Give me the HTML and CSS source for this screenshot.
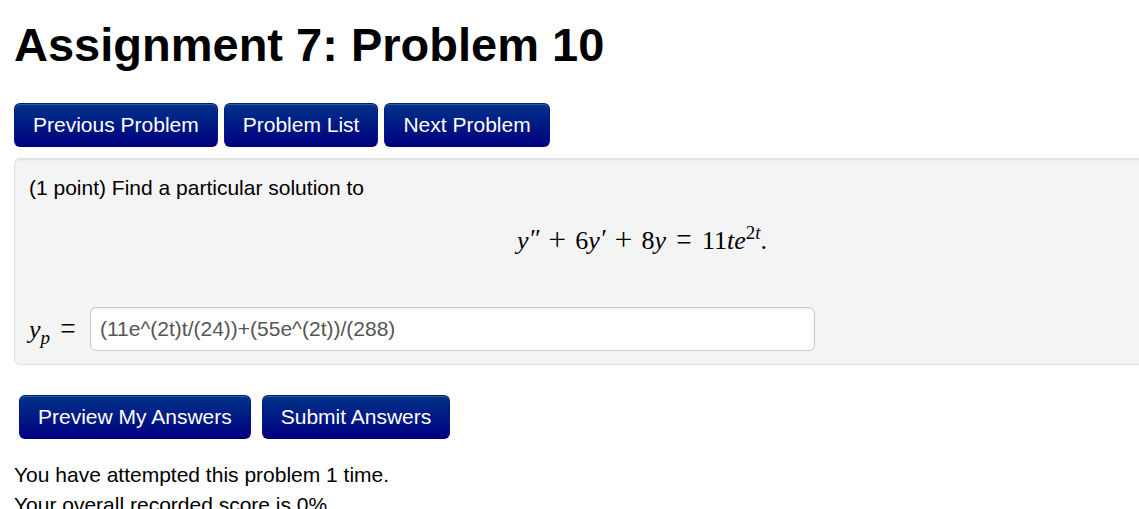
FILE: index.html
```html
<!doctype html>
<html lang="en">
  <head>
    <meta charset="UTF-8" />
    <meta name="viewport" content="width=device-width, initial-scale=1.0" />
    <title>Assignment 7: Problem 10</title>
    <link rel="stylesheet" href="styles.css">
  </head>
  <body>
    <h1>Assignment 7: Problem 10</h1>

    <nav class="problem-nav">
      <a class="btn" href="#previous">Previous Problem</a>
      <a class="btn" href="#list">Problem List</a>
      <a class="btn" href="#next">Next Problem</a>
    </nav>

    <form>
      <div class="problem">
        <p>(1 point) Find a particular solution to</p>

        <div class="equation math">
          <span><i>y</i><sup class="prime">″</sup></span>
          <span class="op">+</span>
          <span>6<i>y</i><sup class="prime">′</sup></span>
          <span class="op">+</span>
          <span>8<i>y</i></span>
          <span class="op">=</span>
          <span>11<i>te</i><sup>2<i>t</i></sup>.</span>
        </div>

        <div class="answer">
          <label class="math" for="answer1">
            <span><i>y</i><sub><i>p</i></sub></span>
            <span class="op">=</span>
          </label>
          <input type="text" id="answer1" value="(11e^(2t)t/(24))+(55e^(2t))/(288)" />
        </div>
      </div>

      <div class="actions">
        <button class="btn" type="button">Preview My Answers</button>
        <button class="btn" type="button">Submit Answers</button>
      </div>
    </form>

    <p>You have attempted this problem 1 time.</p>
    <p>Your overall recorded score is 0%.</p>
  </body>
</html>
```
FILE: styles.css
```css
body {
  margin: 0;
  padding: 15px 14px 0;
  overflow: hidden;
  font-family: "Liberation Sans", Arial, sans-serif;
  font-size: 21px;
  line-height: 30px;
  color: #000;
  background-color: #fff;
}
h1 {
  margin: 0 0 28px;
  font-size: 47px;
  line-height: 60px;
}
p {
  margin: 0;
}
.problem-nav {
  display: flex;
  gap: 6px;
  margin-bottom: 11px;
}
.btn {
  padding: 6px 18px;
  border: 1px solid #001a66;
  border-color: #00246b #001a80 #000066;
  border-radius: 6px;
  background: linear-gradient(#003388, #000080);
  box-shadow: inset 0 1px 0 rgba(255, 255, 255, 0.2);
  color: #fff;
  font: inherit;
  text-decoration: none;
  cursor: pointer;
}
/* the problem area runs on past the right side of the window */
.problem {
  margin-right: -145px;
  padding: 14px 14px 13px;
  border: 1px solid #e1e1e1;
  border-radius: 6px;
  background-color: #f4f4f4;
  box-shadow: inset 0 1px 2px rgba(0, 0, 0, 0.08);
}
.math {
  display: flex;
  align-items: baseline;
  gap: 7px;
  font-family: "Liberation Serif", "Times New Roman", serif;
  font-size: 26px;
  line-height: 30px;
}
.math sup,
.math sub {
  font-size: 19px;
  line-height: 0;
}
.math .prime {
  font-size: 26px;
  font-style: italic;
  vertical-align: 2px;
}
.math .op {
  font-family: Inter, "Liberation Sans", sans-serif;
  font-weight: 200;
  font-size: 34px;
  line-height: 24px;
}
.equation {
  justify-content: center;
  margin: 22px 0 51px;
}
.answer {
  display: flex;
  align-items: center;
  gap: 11px;
}
.answer input {
  box-sizing: border-box;
  width: 725px;
  padding: 6px 9px;
  border: 1px solid #ccc;
  border-radius: 6px;
  background-color: #fff;
  box-shadow: inset 0 1px 2px rgba(0, 0, 0, 0.08);
  color: #555;
  font: inherit;
}
.actions {
  display: flex;
  gap: 11px;
  margin: 30px 5px 21px;
}
```
